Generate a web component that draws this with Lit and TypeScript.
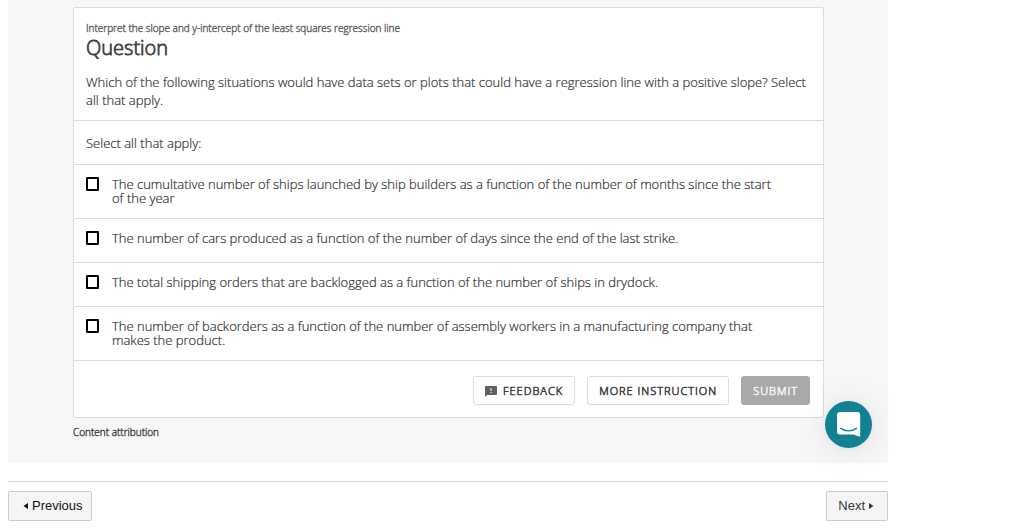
import { LitElement, html, css } from "lit";
import { customElement } from "lit/decorators.js";

@customElement("app-root")
export class AppRoot extends LitElement {
  static styles = css`
    :host {
      display: block;
      font-family: "Open Sans", sans-serif;
      font-weight: 300;
      color: #303030;
      -webkit-text-stroke: 0.2px currentColor;
    }
    * {
      box-sizing: border-box;
    }
    .page {
      max-width: 896px;
      padding: 0 8px;
    }
    .panel {
      padding: 7px 64px 24px 65px;
      background: #f7f7f7;
    }
    .card {
      background: #fff;
      border: 1px solid #dcdcdc;
      border-radius: 2px;
    }
    .intro {
      padding: 12px 12px 11px;
    }
    .objective {
      margin: 0;
      font-size: 10px;
      line-height: 16px;
      color: #606060;
      -webkit-text-stroke: 0.4px currentColor;
    }
    .title {
      margin: 0;
      font-size: 20px;
      line-height: 24px;
      font-weight: 300;
      color: #424242;
      -webkit-text-stroke: 0.8px currentColor;
    }
    .prompt {
      margin: 13px 0 0;
      font-size: 13px;
      line-height: 18px;
    }
    .choices {
      margin: 0;
      padding: 0;
      border: 0;
    }
    .legend {
      display: block;
      float: left;
      width: 100%;
      padding: 13px 12px 12px;
      border-top: 1px solid #dcdcdc;
      font-size: 13px;
      line-height: 18px;
    }
    .choice {
      clear: both;
      display: flex;
      align-items: flex-start;
      gap: 13px;
      min-height: 44px;
      padding: 12px 40px 13px 12px;
      border-top: 1px solid #dcdcdc;
      font-size: 13px;
      line-height: 14px;
    }
    .box {
      flex: none;
      appearance: none;
      width: 13px;
      height: 14px;
      margin: 0;
      border: 2px solid #000;
      border-radius: 1px;
      background: #fff;
    }
    .box:checked {
      background: #000;
    }
    .actions {
      display: flex;
      justify-content: flex-end;
      gap: 12px;
      padding: 15px 13px 12px;
      border-top: 1px solid #dcdcdc;
    }
    .action {
      display: flex;
      align-items: center;
      gap: 6px;
      height: 29px;
      padding: 0 11px;
      border: 1px solid #dcdcdc;
      border-radius: 3px;
      background: #fff;
      color: #424242;
      font: 300 11px/16px "Open Sans", sans-serif;
      letter-spacing: 1px;
      text-transform: uppercase;
      -webkit-text-stroke: 0.6px currentColor;
    }
    .submit {
      border-color: #a9a9a9;
      background: #a9a9a9;
      color: #f4f4f4;
    }
    .attribution {
      display: block;
      width: fit-content;
      margin-top: 7px;
      font-size: 10px;
      line-height: 14px;
      color: #424242;
      text-decoration: none;
      -webkit-text-stroke: 0.4px currentColor;
    }
    .pager {
      display: flex;
      justify-content: space-between;
      margin-top: 18px;
      padding-top: 9px;
      border-top: 1px solid #d6d6d6;
    }
    .nav {
      display: flex;
      align-items: center;
      gap: 4px;
      height: 30px;
      padding: 0 11px;
      border: 1px solid #c7cdd1;
      border-radius: 2px;
      background: #f5f5f5;
      color: #2d3b45;
      font-family: "Liberation Sans", Arial, sans-serif;
      font-size: 13px;
      line-height: 18px;
      font-weight: 400;
      text-decoration: none;
      -webkit-text-stroke: 0;
    }
    .previous {
      padding: 0 8px 0 14px;
      color: #111;
    }
    .next {
      padding-right: 13px;
    }
    .chat {
      position: fixed;
      top: 401px;
      left: min(825px, calc(100% - 63px));
      width: 47px;
      height: 47px;
      padding: 0;
      border: 0;
      border-radius: 50%;
      background: #128293;
      box-shadow: 0 1px 6px rgba(0, 0, 0, 0.06), 0 2px 32px rgba(0, 0, 0, 0.1);
    }
    svg {
      display: block;
    }
  `;

  private choices = [
    "The cumultative number of ships launched by ship builders as a function of the number of months since the start of the year",
    "The number of cars produced as a function of the number of days since the end of the last strike.",
    "The total shipping orders that are backlogged as a function of the number of ships in drydock.",
    "The number of backorders as a function of the number of assembly workers in a manufacturing company that makes the product.",
  ];

  render() {
    return html`
      <main class="page">
        <section class="panel">
          <form class="card" @submit=${(e: Event) => e.preventDefault()}>
            <header class="intro">
              <p class="objective">Interpret the slope and y-intercept of the least squares regression line</p>
              <h1 class="title">Question</h1>
              <p class="prompt">
                Which of the following situations would have data sets or plots that could have a regression line with a
                positive slope? Select all that apply.
              </p>
            </header>
            <fieldset class="choices">
              <legend class="legend">Select all that apply:</legend>
              ${this.choices.map(
                (text, i) => html`
                  <label class="choice" for="choice-${i}">
                    <input class="box" type="checkbox" id="choice-${i}" />
                    <span>${text}</span>
                  </label>
                `
              )}
            </fieldset>
            <div class="actions">
              <button class="action" type="button">
                <svg width="12" height="12" viewBox="0 0 12 12" aria-hidden="true">
                  <path
                    fill="#616161"
                    fill-rule="evenodd"
                    d="M1 1h10a1 1 0 0 1 1 1v7a1 1 0 0 1-1 1H2L0 12V2a1 1 0 0 1 1-1zM5.500 3v3h1V3zM5.500 7v1h1V7z"
                  />
                </svg>
                Feedback
              </button>
              <button class="action" type="button">More instruction</button>
              <button class="action submit" type="submit" disabled>Submit</button>
            </div>
          </form>
          <a class="attribution" href="#attribution">Content attribution</a>
        </section>
        <nav class="pager">
          <a class="nav previous" href="#previous">
            <svg width="5" height="6" viewBox="0 0 5 6" aria-hidden="true"><path fill="currentColor" d="M5 0v6L0.500 3z" /></svg>
            Previous
          </a>
          <a class="nav next" href="#next">
            Next
            <svg width="5" height="6" viewBox="0 0 5 6" aria-hidden="true"><path fill="currentColor" d="M0 0v6L4.500 3z" /></svg>
          </a>
        </nav>
      </main>
      <button class="chat" type="button" aria-label="Open chat">
        <svg width="47" height="47" viewBox="0 0 47 47" aria-hidden="true">
          <path
            fill="#fff"
            d="M15 11h17.200a3 3 0 0 1 3 3v21.800c-2.500-.6-4.600-1.500-6.500-2.300H15a3 3 0 0 1-3-3V14a3 3 0 0 1 3-3z"
          />
          <path fill="none" stroke="#128293" stroke-width="1.300" stroke-linecap="round" d="M15.700 27.400c4.600 3.300 11.200 3.300 15.800 0" />
        </svg>
      </button>
    `;
  }
}
